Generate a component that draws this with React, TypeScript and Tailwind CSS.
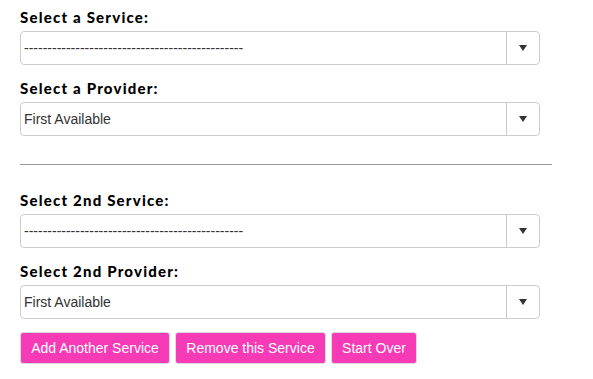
const dashes = '-'.repeat(47);

function Field({ label, value }: { label: string; value: string }) {
  return (
    <div className="flex flex-col">
      <label className="text-[15px] leading-[20px] font-black text-black font-['Lato',sans-serif] tracking-[1.2px]">
        {label}
      </label>
      <div className="mt-[4px] flex h-[34px] w-[520px] rounded-[4px] border border-[#cccccc] bg-white">
        <div className="flex flex-1 items-center px-[3px] text-[14px] text-[#333] font-['Liberation_Sans',Arial,sans-serif] overflow-hidden whitespace-nowrap">
          {value}
        </div>
        <div className="flex w-[33px] items-center justify-center border-l border-[#cccccc]">
          <svg width="8" height="6" viewBox="0 0 8 6">
            <path d="M0 0H8L4 6Z" fill="#333" />
          </svg>
        </div>
      </div>
    </div>
  );
}

export default function App() {
  return (
    <div className="min-h-screen bg-white pl-[20px] pt-[7px]">
      <div className="flex flex-col gap-[13px]">
        <Field label="Select a Service:" value={dashes} />
        <Field label="Select a Provider:" value="First Available" />
      </div>
      <hr className="mt-[28px] mb-[25px] w-[532px] border-0 border-t border-[#999]" />
      <div className="flex flex-col gap-[13px]">
        <Field label="Select 2nd Service:" value={dashes} />
        <Field label="Select 2nd Provider:" value="First Available" />
      </div>
      <div className="mt-[13px] flex gap-[5px] font-['Liberation_Sans',Arial,sans-serif] text-[14px] text-white">
        <button className="h-[32px] w-[150px] rounded-[3px] border border-[#ddd] bg-[#f73bb7] text-center">Add Another Service</button>
        <button className="h-[32px] w-[151px] rounded-[3px] border border-[#ddd] bg-[#f73bb7] text-center">Remove this Service</button>
        <button className="h-[32px] w-[86px] rounded-[3px] border border-[#ddd] bg-[#f73bb7] text-center">Start Over</button>
      </div>
    </div>
  );
}
